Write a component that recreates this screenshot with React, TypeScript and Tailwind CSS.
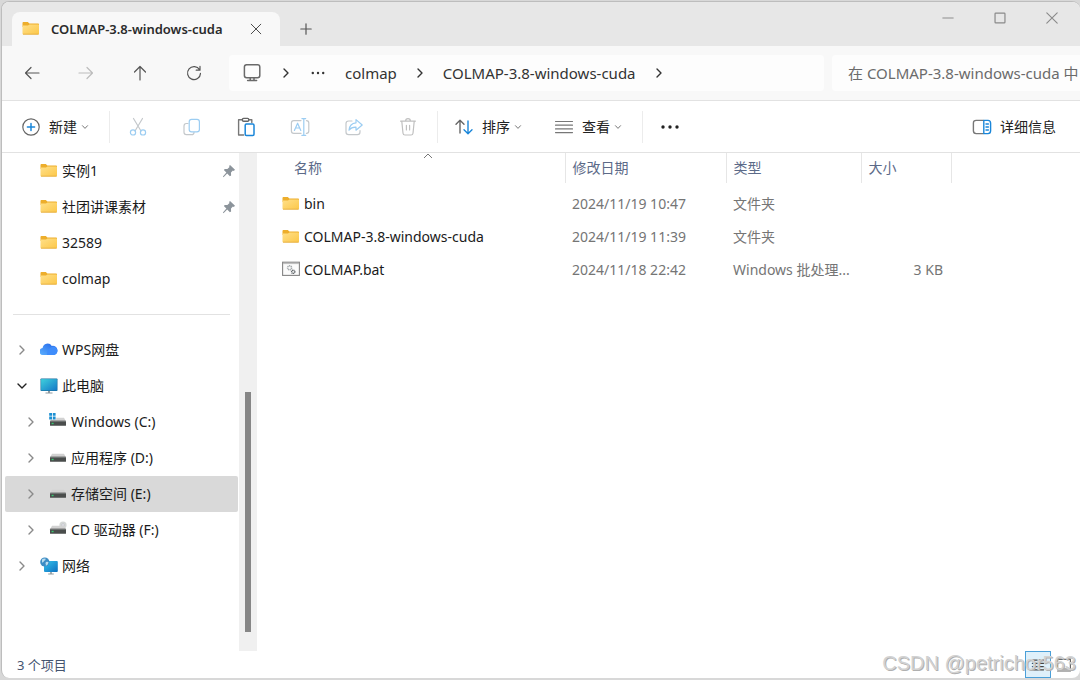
import React from 'react';

type IconProps = { className?: string };

const FolderIcon = ({ className = 'h-[18px] w-[18px]' }: IconProps) => (
  <svg viewBox="0 0 18 18" className={`shrink-0 ${className}`} aria-hidden="true">
    <defs>
      <linearGradient id="folderFront" x1="0" y1="0" x2="1" y2="1">
        <stop offset="0" stopColor="#ffe08a" />
        <stop offset="1" stopColor="#fcc748" />
      </linearGradient>
    </defs>
    <path d="M0.5 2.9Q0.5 2 1.4 2H5.8L7.4 3.6H16.2Q17 3.6 17 4.4V7H0.5Z" fill="#edae2c" />
    <path d="M0.5 5.6H6L7.4 4.4H16.2Q17 4.4 17 5.2V13.6Q17 14.5 16.1 14.5H1.4Q0.5 14.5 0.5 13.6Z" fill="url(#folderFront)" />
    <path d="M1 14.2H16.6" stroke="#e2a93c" strokeWidth="0.8" />
  </svg>
);

const Chevron = ({ className = 'h-3 w-3 text-[#8a8a8a]' }: IconProps) => (
  <svg viewBox="0 0 12 12" className={`shrink-0 ${className}`} fill="none" stroke="currentColor" strokeWidth="1.4" strokeLinecap="round" strokeLinejoin="round" aria-hidden="true">
    <path d="M4 2L8 6L4 10" />
  </svg>
);

const Line = ({ children, className = 'h-5 w-5', width = 1.2 }: { children: React.ReactNode; className?: string; width?: number }) => (
  <svg viewBox="0 0 20 20" className={`shrink-0 ${className}`} fill="none" stroke="currentColor" strokeWidth={width} strokeLinecap="round" strokeLinejoin="round" aria-hidden="true">
    {children}
  </svg>
);

const CaretDown = () => (
  <svg viewBox="0 0 8 8" className="ml-1 h-2 w-2 shrink-0 text-[#777]" fill="none" stroke="currentColor" aria-hidden="true">
    <path d="M1.2 2.4L4 5.4L6.8 2.4" />
  </svg>
);

const PinIcon = () => (
  <svg viewBox="0 0 14 14" className="h-[14px] w-[14px] shrink-0" aria-hidden="true">
    <path d="M8 1L13 5.8L11.8 6.9L10.9 6.6L9 8.6L9.1 11.4L7.9 12.2L5.2 9.5L1.5 13.2L0.9 12.6L4.4 8.6L1.8 6L2.8 4.9L5.4 5L7.5 3.1L7.1 2Z" fill="#8c949b" />
  </svg>
);

const CloudIcon = () => (
  <svg viewBox="0 0 18 18" className="h-[18px] w-[18px] shrink-0" aria-hidden="true">
    <defs>
      <linearGradient id="cloud" x1="0" y1="1" x2="1" y2="0">
        <stop offset="0" stopColor="#5cb0ff" />
        <stop offset="1" stopColor="#1f62e8" />
      </linearGradient>
    </defs>
    <path d="M3.6 14A3.5 3.5 0 0 1 2.6 7A5 5 0 0 1 11.8 5A4.6 4.6 0 0 1 14 14Z" fill="url(#cloud)" />
    <path d="M7 14A8 8 0 0 1 13.4 5.6A4.3 4.3 0 0 1 14.2 14Z" fill="#3f8dfb" />
  </svg>
);

const PcIcon = () => (
  <svg viewBox="0 0 18 18" className="h-[18px] w-[18px] shrink-0" aria-hidden="true">
    <defs>
      <linearGradient id="screen" x1="0" y1="0" x2="1" y2="1">
        <stop offset="0" stopColor="#3fd0dc" />
        <stop offset="1" stopColor="#1478c8" />
      </linearGradient>
    </defs>
    <rect x="0.5" y="1.5" width="17" height="12.5" rx="0.8" fill="#1a6f9e" />
    <rect x="1.1" y="2.1" width="15.8" height="11.3" fill="url(#screen)" />
    <path d="M8 14H10V15.5H12.5V16.5H5.5V15.5H8Z" fill="#8d999f" />
  </svg>
);

const NetworkIcon = () => (
  <svg viewBox="0 0 18 18" className="h-[18px] w-[18px] shrink-0" aria-hidden="true">
    <defs>
      <linearGradient id="net" x1="0" y1="0" x2="1" y2="1">
        <stop offset="0" stopColor="#35c4ec" />
        <stop offset="1" stopColor="#0d6fc0" />
      </linearGradient>
    </defs>
    <rect x="4" y="4" width="13.8" height="11" rx="1" fill="url(#net)" />
    <path d="M10.2 15H11.8V16.6H13.8V17.6H8.2V16.6H10.2Z" fill="#8d999f" />
    <circle cx="4.8" cy="5" r="4.6" fill="#3d8cc4" />
    <path d="M2 2.6Q4 .9 5.8 1.8Q5.4 3.6 4 4Q3.6 5.8 2 5.4ZM6 5Q8 4.4 8.6 5.6Q7.8 8.4 5.8 8.8Q6 7 5.4 6.2Z" fill="#b8dcef" />
  </svg>
);

const DriveIcon = ({ kind = 'plain' }: { kind?: 'windows' | 'plain' | 'disc' }) => (
  <svg viewBox="0 0 18 18" className="h-[18px] w-[18px] shrink-0" aria-hidden="true">
    {kind === 'disc' && (
      <g>
        <circle cx="14" cy="4" r="3.6" fill="#d4d7d6" />
        <circle cx="14" cy="4" r="1.2" fill="#f6f6f6" stroke="#aab" strokeWidth="0.5" />
      </g>
    )}
    <path d="M3 4.8H15L17 8.4H1Z" fill="#d2d2d2" />
    <rect x="1" y="7.8" width="16" height="5" rx="0.6" fill="#4a4d4c" />
    <rect x="1" y="7.8" width="16" height="1" fill="#777a79" />
    <rect x="2.6" y="9.8" width="2" height="1.4" fill="#37c871" />
    {kind === 'windows' && (
      <g>
        <rect x="0" y="-0.6" width="7.2" height="7.2" fill="#fff" />
        <path d="M0.2 0H3V2.8H0.2ZM3.8 0H6.6V2.8H3.8ZM.2 3.6H3V6.4H.2ZM3.8 3.6H6.6V6.4H3.8Z" fill="#1b8fd2" />
      </g>
    )}
  </svg>
);

const BatIcon = () => (
  <svg viewBox="0 0 18 17" className="h-[17px] w-[18px] shrink-0" fill="none" aria-hidden="true">
    <rect x="0.6" y="1.2" width="16.8" height="13.2" fill="#fbfbfb" stroke="#858585" strokeWidth="1.1" />
    <path d="M1 2.6H17" stroke="#b9b9b9" />
    <circle cx="7.6" cy="6.8" r="2" stroke="#a3a8ab" strokeWidth="1.6" strokeDasharray="1.1 0.5" />
    <circle cx="11.2" cy="10.8" r="1.6" stroke="#60666a" strokeWidth="1.4" strokeDasharray="1 0.4" />
  </svg>
);

const Divider = () => <div className="h-8 w-px shrink-0 bg-[#ececec]" />;

const ToolButton = ({ label, children }: { label: string; children: React.ReactNode }) => (
  <button type="button" aria-label={label} className="flex h-9 w-[54px] shrink-0 items-center justify-center">
    {children}
  </button>
);

type TreeItem = { label: string; icon: React.ReactNode; nested?: boolean; open?: boolean; selected?: boolean };

const pinned = [
  { label: '实例1', pin: true },
  { label: '社团讲课素材', pin: true },
  { label: '32589', pin: false },
  { label: 'colmap', pin: false },
];

const tree: TreeItem[] = [
  { label: 'WPS网盘', icon: <CloudIcon /> },
  { label: '此电脑', icon: <PcIcon />, open: true },
  { label: 'Windows (C:)', icon: <DriveIcon kind="windows" />, nested: true },
  { label: '应用程序 (D:)', icon: <DriveIcon />, nested: true },
  { label: '存储空间 (E:)', icon: <DriveIcon />, nested: true, selected: true },
  { label: 'CD 驱动器 (F:)', icon: <DriveIcon kind="disc" />, nested: true },
  { label: '网络', icon: <NetworkIcon /> },
];

const files = [
  { name: 'bin', date: '2024/11/19 10:47', type: '文件夹', size: '', folder: true },
  { name: 'COLMAP-3.8-windows-cuda', date: '2024/11/19 11:39', type: '文件夹', size: '', folder: true },
  { name: 'COLMAP.bat', date: '2024/11/18 22:42', type: 'Windows 批处理...', size: '3 KB', folder: false },
];

const TitleBar = () => (
  <header className="flex h-11 shrink-0 items-end bg-[#e7e7e7] pr-[2px] pl-[10px]">
    <div className="flex h-[34px] w-[268px] items-center rounded-t-lg bg-[#f8f8f8] pr-3 pl-[10px]">
      <FolderIcon />
      <span className="ml-[11px] flex-1 text-[13px] font-semibold whitespace-nowrap text-[#2b2b2b]">COLMAP-3.8-windows-cuda</span>
      <button type="button" aria-label="关闭标签页" className="flex h-6 w-6 items-center justify-center text-[#444]">
        <Line className="h-4 w-4"><path d="M4 4L16 16M16 4L4 16" /></Line>
      </button>
    </div>
    <button type="button" aria-label="新建标签页" className="ml-3 flex h-[34px] w-7 items-center justify-center text-[#555]">
      <Line className="h-4 w-4" width={1.5}><path d="M10 3.5V16.5M3.5 10H16.5" /></Line>
    </button>
    <div className="ml-auto flex self-start text-[#8a8a8a]">
      <button type="button" aria-label="最小化" className="flex h-8 w-[52px] items-center justify-center">
        <Line className="h-4 w-4"><path d="M3.5 10H16.5" /></Line>
      </button>
      <button type="button" aria-label="最大化" className="flex h-8 w-[52px] items-center justify-center">
        <Line className="h-4 w-4" width={1.5}><rect x="3.8" y="3.8" width="12.4" height="12.4" rx="1" /></Line>
      </button>
      <button type="button" aria-label="关闭" className="flex h-8 w-[52px] items-center justify-center">
        <Line className="h-4 w-4" width={1.4}><path d="M3.5 3.5L16.5 16.5M16.5 3.5L3.5 16.5" /></Line>
      </button>
    </div>
  </header>
);

const NavBar = () => (
  <nav className="flex h-[55px] shrink-0 items-center border-b border-[#e2e2e2] bg-[#f8f8f8] pl-[3px]">
    <div className="flex text-[#555]">
      <ToolButton label="后退"><Line><path d="M17 10H3.5M9 4.5L3.5 10L9 15.5" /></Line></ToolButton>
      <ToolButton label="前进"><Line className="h-5 w-5 text-[#bcbcbc]"><path d="M3 10H16.5M11 4.5L16.5 10L11 15.5" /></Line></ToolButton>
      <ToolButton label="向上"><Line><path d="M10 17V3.5M4.5 9L10 3.5L15.5 9" /></Line></ToolButton>
      <ToolButton label="刷新"><Line><path d="M15.6 6.8A6.5 6.5 0 1 0 16.5 10.4M16 3.4V7.2H12.2" /></Line></ToolButton>
    </div>
    <div className="ml-2 flex h-9 min-w-0 flex-1 items-center rounded bg-[#fdfdfd] pl-[11px] text-[15px] text-[#333]">
      <button type="button" aria-label="此电脑" className="flex w-6 justify-center text-[#6a6a6a]">
        <Line width={1.5}><rect x="2.4" y="1.8" width="15.4" height="13" rx="2.2" /><path d="M8.2 15V17.2M12 15V17.2M5.6 17.6H14.6" /></Line>
      </button>
      <Chevron className="ml-4 h-3 w-3 text-[#333]" />
      <button type="button" aria-label="更多路径" className="ml-[18px] flex w-4 justify-center">
        <svg viewBox="0 0 14 4" className="h-1 w-[14px]" fill="#333"><circle cx="1.8" cy="2" r="1.2" /><circle cx="7" cy="2" r="1.2" /><circle cx="12.2" cy="2" r="1.2" /></svg>
      </button>
      <a href="#colmap" className="ml-[19px]">colmap</a>
      <Chevron className="mx-[17px] h-3 w-3 text-[#333]" />
      <a href="#colmap-cuda" className="whitespace-nowrap">COLMAP-3.8-windows-cuda</a>
      <Chevron className="mx-[17px] h-3 w-3 text-[#333]" />
    </div>
    <input
      type="text"
      aria-label="搜索"
      placeholder="在 COLMAP-3.8-windows-cuda 中"
      className="ml-2 h-9 w-[248px] shrink-0 rounded-l bg-[#fdfdfd] pl-4 text-[15px] outline-none placeholder:text-[#6b6b6b]"
    />
  </nav>
);

const ToolBar = () => (
  <div className="flex h-[52px] shrink-0 items-center border-b border-[#e2e2e2] pt-px pr-6 pl-[19px] text-[#222]">
    <button type="button" className="mr-5 flex shrink-0 items-center">
      <Line><circle cx="10" cy="10" r="8.2" stroke="#666" /><path d="M10 6.4V13.6M6.4 10H13.6" stroke="#1a86d9" strokeWidth="1.5" /></Line>
      <span className="ml-2">新建</span>
      <CaretDown />
    </button>
    <Divider />
    <div className="flex pr-[2px] pl-px">
      <ToolButton label="剪切">
        <Line><path d="M5.5 1.5L13 14M14.5 1.5L7 14" stroke="#c4c8cb" /><circle cx="5" cy="15.4" r="2.6" stroke="#9ccdf2" /><circle cx="15" cy="15.4" r="2.6" stroke="#9ccdf2" /></Line>
      </ToolButton>
      <ToolButton label="复制">
        <Line><path d="M6 6.5H4.4Q2 6.5 2 8.9V15.2Q2 17.6 4.4 17.6H9.6Q12 17.6 12 15.4" stroke="#c4c8cb" /><rect x="7.2" y="2.4" width="10.2" height="12.4" rx="2.4" stroke="#9ccdf2" /></Line>
      </ToolButton>
      <ToolButton label="粘贴">
        <Line width={1.4}><path d="M6.4 2.8H2.6V18H7.6M13 2.8H15.8V5.6" stroke="#777" /><rect x="6.4" y="1.4" width="6.4" height="2.8" rx="1.2" stroke="#666" /><rect x="9.2" y="7" width="8.8" height="11.4" rx="1.2" stroke="#1a86d9" strokeWidth="1.5" /></Line>
      </ToolButton>
      <ToolButton label="重命名">
        <Line><path d="M11 3.6H3.8Q1.4 3.6 1.4 6V14Q1.4 16.4 3.8 16.4H11" stroke="#c4c8cb" /><path d="M16.4 3.6Q18.8 3.6 18.8 6V14Q18.8 16.4 16.4 16.4" stroke="#c4c8cb" /><path d="M4.4 13.4L7.6 6.2L10.8 13.4M5.5 11H9.7M13.8 1.6V18.4M11.9 1.6H15.7M11.9 18.4H15.7" stroke="#9ccdf2" /></Line>
      </ToolButton>
      <ToolButton label="共享">
        <Line><path d="M8 4H4.6Q2 4 2 6.6V15Q2 17.6 4.6 17.6H13.4Q16 17.6 16 15V13.6" stroke="#c4c8cb" /><path d="M12 2.6L18.2 8L12 13.2V10.2Q7.4 10 5 13.2Q5.6 6.2 12 5.8Z" stroke="#9ccdf2" /></Line>
      </ToolButton>
      <ToolButton label="删除">
        <Line className="h-5 w-5 text-[#c0c0c0]"><path d="M2.6 4.2H17.4M7.6 4Q7.6 1.6 10 1.6Q12.4 1.6 12.4 4M3.8 4.4L5 16.2Q5.2 18 7 18H13Q14.8 18 15 16.2L16.2 4.4M8.4 8.4V13M11.6 8.4V13" /></Line>
      </ToolButton>
    </div>
    <Divider />
    <button type="button" className="ml-4 flex shrink-0 items-center">
      <Line width={1.4}><path d="M6 16V3.4M2 7.2L6 3.2L10 7.2" stroke="#666" /><path d="M14 4V16.6M10 12.8L14 16.8L18 12.8" stroke="#1a86d9" /></Line>
      <span className="ml-2">排序</span>
      <CaretDown />
    </button>
    <button type="button" className="ml-8 flex shrink-0 items-center">
      <Line className="h-5 w-5 text-[#777]"><path d="M1.5 4.5H18.5M1.5 8.2H18.5M1.5 11.9H18.5M1.5 15.6H18.5" /></Line>
      <span className="ml-2">查看</span>
      <CaretDown />
    </button>
    <div className="ml-5"><Divider /></div>
    <ToolButton label="更多">
      <svg viewBox="0 0 20 6" className="h-[6px] w-5" fill="#222"><circle cx="3" cy="3" r="1.7" /><circle cx="10" cy="3" r="1.7" /><circle cx="17" cy="3" r="1.7" /></svg>
    </ToolButton>
    <button type="button" className="ml-auto flex shrink-0 items-center">
      <Line width={1.4}><path d="M11.5 3.4H4.2Q1.4 3.4 1.4 6.2V13.8Q1.4 16.6 4.2 16.6H11.5" stroke="#777" /><path d="M11.8 3.4H16Q18.6 3.4 18.6 6.2V13.8Q18.6 16.6 16 16.6H11.8ZM14 7H16.4M14 10H16.4M14 13H16.4" stroke="#1a86d9" /></Line>
      <span className="ml-2">详细信息</span>
    </button>
  </div>
);

const Sidebar = () => (
  <aside className="flex w-[255px] shrink-0">
    <div className="min-w-0 flex-1 pr-px pl-[3px] text-[#1b1b1b]">
      <ul>
        {pinned.map((item) => (
          <li key={item.label} className="flex h-9 items-center pr-[2px] pl-[35px]">
            <FolderIcon />
            <a href="#folder" className="ml-1 flex-1">{item.label}</a>
            {item.pin && <PinIcon />}
          </li>
        ))}
      </ul>
      <div className="flex h-[35px] items-center pr-2 pl-2"><hr className="flex-1 border-[#e2e2e2]" /></div>
      <ul>
        {tree.map((item) => (
          <li
            key={item.label}
            className={`flex h-9 items-center rounded-[2px] ${item.nested ? 'pl-5' : 'pl-[11px]'} ${item.selected ? 'bg-[#d9d9d9]' : ''}`}
          >
            <button type="button" aria-label={`展开 ${item.label}`} aria-expanded={!!item.open} className="flex shrink-0">
              <Chevron className={item.open ? 'h-3 w-3 rotate-90 text-[#222]' : 'h-3 w-3 text-[#8a8a8a]'} />
            </button>
            <a href="#location" className="ml-3 flex flex-1 items-center gap-1">
              {item.icon}
              {item.label}
            </a>
          </li>
        ))}
      </ul>
    </div>
    <div className="flex w-[18px] justify-center bg-[#f0f0f0] pt-[239px] pb-[19px]">
      <div className="w-[6px] bg-[#868686]" />
    </div>
  </aside>
);

const FileTable = () => (
  <main className="min-w-0 flex-1 pl-[25px]">
    <table className="table-fixed border-collapse text-left">
      <colgroup>
        <col className="w-[283px]" />
        <col className="w-[161px]" />
        <col className="w-[135px]" />
        <col className="w-[90px]" />
      </colgroup>
      <thead className="text-[#5c6a88]">
        <tr className="h-[30px]">
          <th className="relative border-r border-[#e6e6e6] pl-3 font-normal">
            名称
            <svg viewBox="0 0 10 6" className="absolute top-0 left-1/2 h-[6px] w-[10px]" fill="none" stroke="#777" aria-hidden="true"><path d="M1 5L5 1L9 5" /></svg>
          </th>
          <th className="border-r border-[#e6e6e6] pl-[7px] font-normal">修改日期</th>
          <th className="border-r border-[#e6e6e6] pl-[7px] font-normal">类型</th>
          <th className="border-r border-[#e6e6e6] pl-[7px] font-normal">大小</th>
        </tr>
      </thead>
      <tbody className="text-[#757575]">
        <tr className="h-1"><td colSpan={4} /></tr>
        {files.map((file) => (
          <tr key={file.name} className="h-[33px]">
            <td className="text-[#1b1b1b]">
              <div className="flex items-center gap-1">
                {file.folder ? <FolderIcon /> : <BatIcon />}
                <a href="#file">{file.name}</a>
              </div>
            </td>
            <td className="pl-[7px] whitespace-nowrap">{file.date}</td>
            <td className="pl-[7px] whitespace-nowrap">{file.type}</td>
            <td className="pr-2 text-right">{file.size}</td>
          </tr>
        ))}
      </tbody>
    </table>
  </main>
);

const StatusBar = () => (
  <footer className="flex h-[27px] shrink-0 items-center justify-between pr-[3px] pl-[15px] text-[#44546f]">
    <span className="text-[13px]">3 个项目</span>
    <div className="flex">
      <button type="button" aria-label="详细信息视图" className="flex h-[27px] w-[26px] items-center justify-center border border-[#4a9fd8] bg-[#dff0fa] text-[#444]">
        <Line className="h-4 w-4" width={1.5}><path d="M3 4H17M3 8H17M3 12H17M3 16H17" /></Line>
      </button>
      <button type="button" aria-label="大图标视图" className="flex h-[27px] w-[26px] items-center justify-center text-[#666]">
        <Line className="h-4 w-4" width={1.5}><rect x="2" y="3" width="16" height="12" /><path d="M2 17.5H18" /></Line>
      </button>
    </div>
  </footer>
);

export default function App() {
  return (
    <div className="flex min-h-screen flex-col bg-[#d8d8d8] pt-px pb-[2px] pl-px font-['Noto_Sans','Noto_Sans_CJK_SC',sans-serif] text-[14px] leading-5">
      <div className="relative flex flex-1 flex-col overflow-hidden rounded-lg border-t border-l border-[#bdbdbd] bg-white">
        <TitleBar />
        <NavBar />
        <ToolBar />
        <div className="flex flex-1">
          <Sidebar />
          <FileTable />
        </div>
        <StatusBar />
        <div className="pointer-events-none absolute right-1 bottom-px font-['Liberation_Sans',sans-serif] text-[20px] leading-7 whitespace-nowrap text-[#d2d2d2] [text-shadow:1px_1px_0_#b0b0b0]">
          CSDN @petrichor563
        </div>
      </div>
    </div>
  );
}
